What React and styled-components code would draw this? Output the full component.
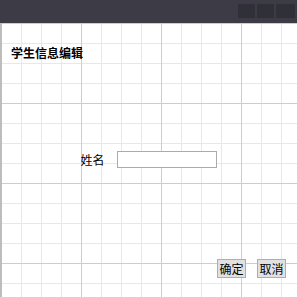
import React from 'react';
import styled, { createGlobalStyle } from 'styled-components';

const GlobalStyle = createGlobalStyle`
  html, body {
    margin: 0;
    padding: 0;
    background: #ffffff;
  }
  body {
    font-family: "Noto Sans CJK SC", "Noto Sans", sans-serif;
  }
`;

const Window = styled.div`
  width: 297px;
  height: 297px;
  display: flex;
  flex-direction: column;
  overflow: hidden;
`;

const TitleBar = styled.div`
  height: 23px;
  flex: none;
  background-color: #3d3c46;
  display: flex;
  justify-content: flex-end;
  align-items: center;
  gap: 2px;
  padding-right: 2px;
  box-sizing: border-box;
`;

const BarButton = styled.div`
  width: ${p => p.w}px;
  height: 14px;
  margin-top: -1px;
  background-color: #303038;
`;

const Canvas = styled.div`
  flex: 1;
  display: flex;
  flex-direction: column;
  border-left: 2px solid #bdbdbd;
  background-color: #ffffff;
  background-image:
    linear-gradient(to right, #cdcdcd 1px, transparent 1px),
    linear-gradient(to bottom, #cdcdcd 1px, transparent 1px),
    linear-gradient(to right, #e8e8e8 1px, transparent 1px),
    linear-gradient(to bottom, #e8e8e8 1px, transparent 1px);
  background-size: 80px 80px, 80px 80px, 20px 20px, 20px 20px;
  background-position: -1px 0, -1px 0, -1px 0, -1px 0;
`;

const Heading = styled.h1`
  margin: 22px 0 0 9px;
  font-size: 12px;
  line-height: 16px;
  font-weight: 700;
  color: #000;
`;

const FieldRow = styled.div`
  margin-top: 90px;
  display: flex;
  align-items: center;
  justify-content: center;
  gap: 12px;
  padding-right: 2px;
`;

const Label = styled.span`
  font-size: 12px;
  line-height: 17px;
  color: #000;
`;

const TextInput = styled.input`
  width: 100px;
  height: 17px;
  box-sizing: border-box;
  border: 1px solid #ababab;
  padding: 0 2px;
  margin: 0;
  background: #fff;
  outline: none;
  font-size: 12px;
`;

const Footer = styled.div`
  margin-top: auto;
  display: flex;
  justify-content: flex-end;
  gap: 11px;
  padding: 0 11px 19px 0;
`;

const Button = styled.button`
  width: 29px;
  height: 19px;
  padding: 0;
  margin: 0;
  box-sizing: border-box;
  border: 1px solid #adadad;
  background-color: #e1e1e1;
  color: #000;
  font-family: "Noto Sans CJK SC", "Noto Sans", sans-serif;
  font-size: 12px;
  line-height: 17px;
`;

export default function App() {
  return (
    <>
      <GlobalStyle />
      <Window>
        <TitleBar>
          <BarButton w={17} />
          <BarButton w={17} />
          <BarButton w={19} />
        </TitleBar>
        <Canvas>
          <Heading>学生信息编辑</Heading>
          <FieldRow>
            <Label>姓名</Label>
            <TextInput type="text" />
          </FieldRow>
          <Footer>
            <Button type="button">确定</Button>
            <Button type="button">取消</Button>
          </Footer>
        </Canvas>
      </Window>
    </>
  );
}
